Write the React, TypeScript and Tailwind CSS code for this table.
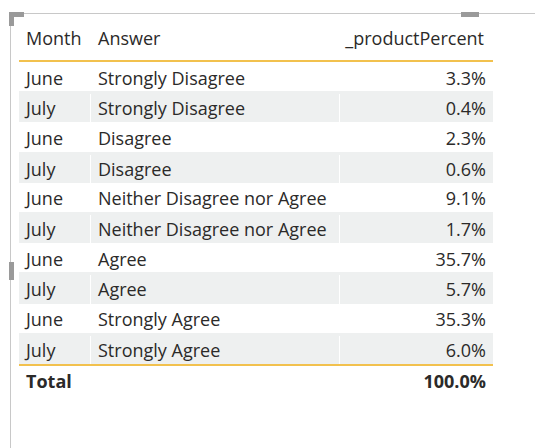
const rows = [
  { month: "June", answer: "Strongly Disagree", pct: "3.3%" },
  { month: "July", answer: "Strongly Disagree", pct: "0.4%" },
  { month: "June", answer: "Disagree", pct: "2.3%" },
  { month: "July", answer: "Disagree", pct: "0.6%" },
  { month: "June", answer: "Neither Disagree nor Agree", pct: "9.1%" },
  { month: "July", answer: "Neither Disagree nor Agree", pct: "1.7%" },
  { month: "June", answer: "Agree", pct: "35.7%" },
  { month: "July", answer: "Agree", pct: "5.7%" },
  { month: "June", answer: "Strongly Agree", pct: "35.3%" },
  { month: "July", answer: "Strongly Agree", pct: "6.0%" },
];

const App = () => {
  return (
    <div
      className="relative w-[535px] h-[448px] bg-white overflow-hidden text-[#2b2a29]"
      style={{ fontFamily: '"Open Sans", "Noto Sans", sans-serif' }}
    >
      {/* visual frame */}
      <div className="absolute left-[10px] top-[13px] right-0 bottom-0 border-l border-t border-[#c8c8c8]" />
      <div className="absolute left-[9px] top-[12px] w-[15px] h-[5px] bg-[#9a9a9a]" />
      <div className="absolute left-[9px] top-[12px] w-[5px] h-[14px] bg-[#9a9a9a]" />
      <div className="absolute left-[461px] top-[12px] w-[18px] h-[5px] bg-[#9a9a9a]" />
      <div className="absolute left-[9px] top-[262px] w-[5px] h-[18px] bg-[#9a9a9a]" />

      <div className="absolute left-[19px] top-[15px] w-[474px] text-[18px] leading-[24px]">
        <div className="flex h-[47px] items-center border-b-2 border-[#f2c14e]">
          <div className="w-[72px] pl-[7px]">Month</div>
          <div className="w-[249px] pl-[7px]">Answer</div>
          <div className="flex-1 pr-[9px] text-right">_productPercent</div>
        </div>
        {rows.map((r, i) => (
          <div
            key={i}
            className={`flex h-[30.2px] items-center pt-[2px] ${
              i % 2 === 1 ? "bg-[#eef0f0]" : "bg-white border-b border-[#eef0f0]"
            }`}
          >
            <div className="w-[72px] h-full flex items-center pl-[7px] border-r border-white">
              {r.month}
            </div>
            <div className="w-[249px] h-full flex items-center pl-[7px] border-r border-white">
              {r.answer}
            </div>
            <div className="flex-1 pr-[7px] text-right">{r.pct}</div>
          </div>
        ))}
        <div className="flex h-[32px] items-center border-t-2 border-[#f2c14e] font-bold">
          <div className="w-[72px] pl-[7px]">Total</div>
          <div className="w-[249px]" />
          <div className="flex-1 pr-[7px] text-right">100.0%</div>
        </div>
      </div>
    </div>
  );
};

export default App;
